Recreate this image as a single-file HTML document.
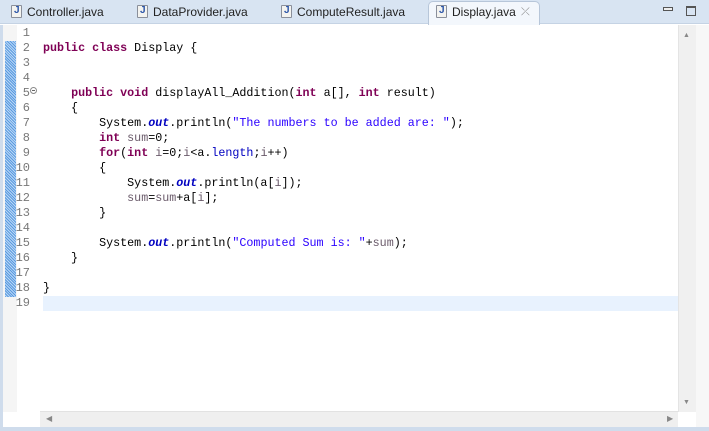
<!DOCTYPE html>
<html><head><meta charset="utf-8"><style>
*{margin:0;padding:0;box-sizing:border-box}
body{width:709px;height:431px;overflow:hidden;background:#fff;position:relative;font-family:"Liberation Sans",sans-serif}
.tabbar{position:absolute;left:0;top:0;width:709px;height:24px;background:#d8e4f2;border-bottom:1px solid #c5d3e4}
.tab{position:absolute;top:4px;font-size:12px;color:#222;height:18px;line-height:16px}
.ic{position:absolute;top:5px;width:11px;height:13px;border:1px solid #8a8f9a;background:#f3f3f0;border-radius:1px}
.ic:after{content:"J";position:absolute;left:2px;top:-1px;font:bold 10px "Liberation Sans",sans-serif;color:#2b55a8}
.active{position:absolute;left:428px;top:1px;width:112px;height:24px;background:#f3f7fc;border:1px solid #b7c6d9;border-bottom:none;border-radius:5px 5px 0 0}
.ln{position:absolute;left:14px;width:16px;text-align:right;font:12px "Liberation Mono",monospace;color:#787878}
.l{position:absolute;left:43px;font:11.7px/15px "Liberation Mono",monospace;color:#000;white-space:pre}
.k{color:#7f0055;font-weight:bold}.s{color:#2a00ff}.f{color:#0000c0;font-style:italic;font-weight:bold}.fl{color:#0000c0}.v{color:#6a5a6a}
.hatch{position:absolute;left:5px;top:41px;width:11px;height:256px;background:repeating-linear-gradient(45deg,#5a9be0 0 1px,#b9d6f5 1px 2px)}
</style></head><body>
<div class="tabbar">
 <div class="active"></div>
 <div class="ic" style="left:11px"></div><div class="tab" style="left:27px">Controller.java</div>
 <div class="ic" style="left:137px"></div><div class="tab" style="left:153px">DataProvider.java</div>
 <div class="ic" style="left:281px"></div><div class="tab" style="left:297px">ComputeResult.java</div>
 <div class="ic" style="left:436px"></div><div class="tab" style="left:452px">Display.java</div>
 <div class="tab" style="left:521px;color:#888;font-size:11px">⤫</div>
 <div style="position:absolute;left:663px;top:7px;width:10px;height:4px;border:1px solid #555;background:#eee"></div>
 <div style="position:absolute;left:686px;top:6px;width:10px;height:10px;border:1px solid #555;border-top-width:2px"></div>
</div>
<div style="position:absolute;left:0;top:25px;width:3px;height:406px;background:#cfdcec"></div>
<div style="position:absolute;left:3px;top:25px;width:14px;height:387px;background:#f5f5f5"></div>
<div class="hatch"></div>
<div style="position:absolute;left:43px;top:296px;width:635px;height:15px;background:#e8f2fe"></div>
<div style="position:absolute;left:30px;top:87px;width:7px;height:7px;border:1px solid #8a8a8a;border-radius:50%;background:#fff"></div>
<div style="position:absolute;left:32px;top:90px;width:3px;height:1px;background:#666"></div>
<div id="lines"></div>
<div style="position:absolute;left:678px;top:25px;width:18px;height:387px;background:#f0f0f0;border-left:1px solid #e4e4e4"></div>
<div style="position:absolute;left:683px;top:32px;font-size:7px;color:#888">▲</div>
<div style="position:absolute;left:683px;top:399px;font-size:7px;color:#888">▼</div>
<div style="position:absolute;left:40px;top:411px;width:638px;height:16px;background:#efefef;border-top:1px solid #e2e2e2"></div>
<div style="position:absolute;left:46px;top:414px;font-size:8px;color:#888">◀</div>
<div style="position:absolute;left:667px;top:414px;font-size:8px;color:#888">▶</div>
<div style="position:absolute;left:0;top:427px;width:709px;height:4px;background:#cfdcec"></div>
<div style="position:absolute;left:696px;top:25px;width:13px;height:402px;background:#f7f7f7"></div>
<script>
var code=[
"",
'<span class="k">public class</span> Display {',
"","",
'    <span class="k">public void</span> displayAll_Addition(<span class="k">int</span> a[], <span class="k">int</span> result)',
'    {',
'        System.<span class="f">out</span>.println(<span class="s">"The numbers to be added are: "</span>);',
'        <span class="k">int</span> <span class="v">sum</span>=0;',
'        <span class="k">for</span>(<span class="k">int</span> <span class="v">i</span>=0;<span class="v">i</span>&lt;a.<span class="fl">length</span>;<span class="v">i</span>++)',
'        {',
'            System.<span class="f">out</span>.println(a[<span class="v">i</span>]);',
'            <span class="v">sum</span>=<span class="v">sum</span>+a[<span class="v">i</span>];',
'        }',
'',
'        System.<span class="f">out</span>.println(<span class="s">"Computed Sum is: "</span>+<span class="v">sum</span>);',
'    }',
'',
'}',
''];
var h='';
for(var i=0;i<code.length;i++){var y=26+i*15;
h+='<div class="ln" style="top:'+(y)+'px;line-height:15px">'+(i+1)+'</div><div class="l" style="top:'+y+'px">'+code[i]+'</div>';}
document.getElementById('lines').innerHTML=h;
</script>
</body></html>
